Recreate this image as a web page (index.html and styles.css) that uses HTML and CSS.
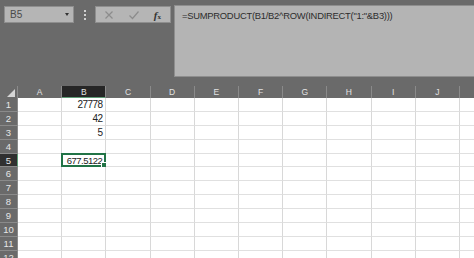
FILE: index.html
```html
<!DOCTYPE html>
<html lang="en">
<head>
  <meta charset="UTF-8">
  <title>Sheet</title>
  <link rel="stylesheet" href="styles.css">
</head>
<body>
  <div class="toolbar">
    <div class="name-box">
      <span>B5</span>
      <span class="arrow"></span>
    </div>
    <div class="grip"><i></i><i></i><i></i></div>
    <div class="buttons">
      <svg width="10" height="10" viewBox="0 0 10 10"><path d="M1.5 1.5 L8.5 8.5 M8.5 1.5 L1.5 8.5" stroke="#8c8c8c" stroke-width="1.2" fill="none"/></svg>
      <svg width="12" height="10" viewBox="0 0 12 10"><path d="M1.5 5.5 L4.5 8.5 L10.5 1.5" stroke="#8c8c8c" stroke-width="1.2" fill="none"/></svg>
      <span class="fx"><i>f</i><small>x</small></span>
    </div>
    <div class="formula">=SUMPRODUCT(B1/B2^ROW(INDIRECT("1:"&amp;B3)))</div>
  </div>

  <div class="sheet">
    <div class="corner"><span></span></div>
    <div class="col-head">A</div>
    <div class="col-head active">B</div>
    <div class="col-head">C</div>
    <div class="col-head">D</div>
    <div class="col-head">E</div>
    <div class="col-head">F</div>
    <div class="col-head">G</div>
    <div class="col-head">H</div>
    <div class="col-head">I</div>
    <div class="col-head">J</div>
    <div class="col-head"></div>
  </div>

  <script>
    // build the rows of the grid
    const sheet = document.querySelector('.sheet');
    const values = { 1: '27778', 2: '42', 3: '5', 5: '677.5122' };
    for (let r = 1; r <= 12; r++) {
      const head = document.createElement('div');
      head.className = 'row-head' + (r === 5 ? ' active' : '');
      head.textContent = r;
      sheet.appendChild(head);
      for (let c = 0; c < 11; c++) {
        const cell = document.createElement('div');
        cell.className = 'cell';
        if (c === 1 && values[r]) cell.textContent = values[r];
        if (c === 1 && r === 5) cell.classList.add('selected');
        sheet.appendChild(cell);
      }
    }
  </script>
</body>
</html>
```

FILE: styles.css
```css
* {
  margin: 0;
  padding: 0;
  box-sizing: border-box;
}

body {
  width: 474px;
  height: 258px;
  overflow: hidden;
  background: #6a6a6a;
  font-family: 'Liberation Sans', Arial, sans-serif;
}

.toolbar {
  display: flex;
  align-items: flex-start;
  height: 86px;
  padding: 5px 0 0 4px;
}

.name-box {
  display: flex;
  align-items: center;
  justify-content: space-between;
  width: 70px;
  height: 17px;
  margin-top: 1px;
  padding: 0 4px 0 5px;
  background: #b5b5b5;
  border: 1px solid #8e8e8e;
  color: #4a4a4a;
  font-size: 10px;
}

.arrow {
  width: 0;
  height: 0;
  border-left: 2.5px solid transparent;
  border-right: 2.5px solid transparent;
  border-top: 3px solid #333;
}

.grip {
  display: flex;
  flex-direction: column;
  gap: 2px;
  margin: 5px 0 0 10px;
  width: 2px;
}

.grip i {
  width: 2px;
  height: 2px;
  background: #d0d0d0;
}

.buttons {
  display: flex;
  align-items: center;
  justify-content: space-between;
  width: 76px;
  height: 17px;
  margin: 1px 0 0 9px;
  padding: 0 9px 0 8px;
  background: #b5b5b5;
  border: 1px solid #8e8e8e;
}

.fx {
  font-family: 'Liberation Serif', serif;
  color: #333;
  font-size: 11px;
  font-weight: bold;
}

.fx small {
  font-size: 7px;
}

.formula {
  flex: 1;
  height: 72px;
  margin-left: 3px;
  padding: 4px 0 0 7px;
  background: #b4b4b4;
  border: 1px solid #8e8e8e;
  border-right: none;
  color: #2d2d2d;
  font-size: 9.4px;
  letter-spacing: -0.25px;
  white-space: nowrap;
}

.sheet {
  display: grid;
  grid-template-columns: 18px repeat(11, 44.2px);
  grid-template-rows: 12px repeat(12, 13.9px);
}

.corner {
  position: relative;
  border-right: 1px solid #8a8a8a;
}

.corner span {
  position: absolute;
  right: 2px;
  bottom: 1px;
  width: 0;
  height: 0;
  border-left: 8px solid transparent;
  border-bottom: 8px solid #d6d6d6;
}

.col-head {
  display: flex;
  align-items: center;
  justify-content: center;
  border-right: 1px solid #8a8a8a;
  color: #e2e2e2;
  font-size: 8.5px;
}

.col-head.active {
  background: #262626;
  border-bottom: 1px solid #5e9c76;
}

.row-head {
  display: flex;
  align-items: center;
  justify-content: center;
  border-bottom: 1px solid #8a8a8a;
  border-right: 1px solid #8a8a8a;
  color: #e6e6e6;
  font-size: 9.5px;
}

.row-head.active {
  background: #303030;
  border-right: 1px solid #5e9c76;
}

.cell {
  position: relative;
  display: flex;
  align-items: center;
  justify-content: flex-end;
  padding-right: 3px;
  background: #fff;
  border-right: 1px solid #d8d8d8;
  border-bottom: 1px solid #e0e0e0;
  color: #222;
  font-size: 10px;
  letter-spacing: -0.6px;
}

.cell.selected {
  border: 2px solid #217346;
  padding-right: 2px;
  margin: -1px 0 0 -1px;
  width: calc(100% + 1px);
  height: calc(100% + 1px);
  font-size: 9.5px;
  letter-spacing: -0.5px;
}

.cell.selected::after {
  content: '';
  position: absolute;
  right: -4px;
  bottom: -4px;
  width: 5px;
  height: 5px;
  background: #217346;
  border: 1px solid #fff;
}
```
